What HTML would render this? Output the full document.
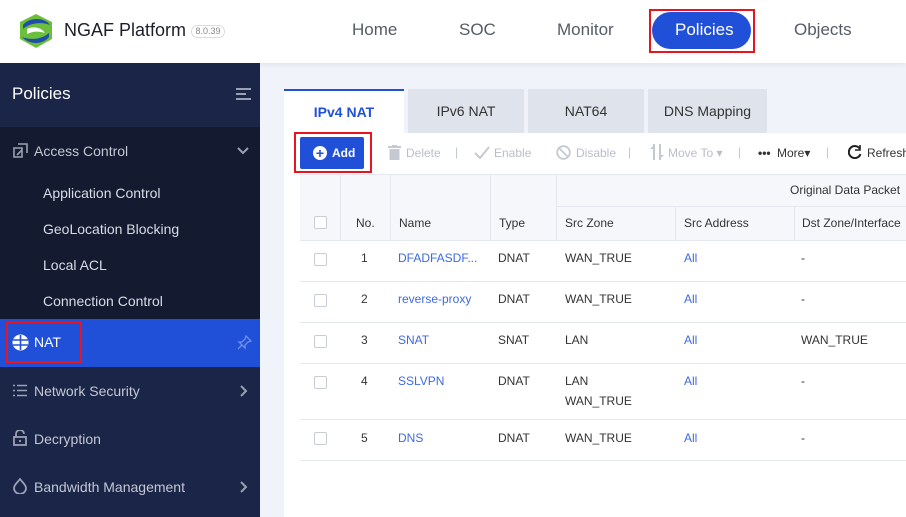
<!DOCTYPE html>
<html><head><meta charset="utf-8"><style>
*{margin:0;padding:0;box-sizing:border-box}
body{width:906px;height:517px;overflow:hidden;font-family:"Liberation Sans",sans-serif;background:#f0f3fa;position:relative;font-size:13px}
.a{position:absolute}
.hdr{left:0;top:0;width:906px;height:63px;background:#fff;box-shadow:0 2px 4px rgba(0,0,0,.06)}
.nav{top:20px;font-size:17px;color:#555c66}
.side{left:0;top:63px;width:260px;height:454px;background:#1b2547}
.sub{left:0;top:127px;width:260px;height:192px;background:#141a2f}
.st{color:#c3c8d4;font-size:14px}
.si{color:#d8dce6;font-size:14px;left:43px}
.panel{left:284px;top:133px;width:622px;height:384px;background:#fff}
.tab{top:89px;height:44px;background:#dfe3ec;font-size:14px;color:#333;text-align:center;line-height:44px}
.tb{top:146px;font-size:12px;color:#b9bec8}
.sep{top:145px;font-size:12px;color:#c0c4cc}
.th{color:#333;font-size:12px}
.cb{width:13px;height:13px;border:1px solid #c8ccd4;border-radius:2px;background:#fff}
.hl{background:#e4e7ed;height:1px}
.vl{background:#e4e7ed;width:1px}
.c{font-size:12px;color:#333}
.l{color:#3e6ae0}
.red{border:2px solid #e8141f}
</style></head><body>
<div class="a hdr"></div>
<svg class="a" style="left:17px;top:13px" width="38" height="36" viewBox="0 0 38 36"><path d="M19 1 L35 9 L35 26 L19 35 L3 26 L3 9Z" fill="#6cbf3a"/><path d="M6 12 C12 4 28 4 33 12 C26 9 14 9 6 16Z" fill="#1f4fa8"/><path d="M32 24 C26 32 12 32 5 24 C12 27 24 27 32 20Z" fill="#1f4fa8"/><path d="M10 16 C16 13 24 14 28 20 C22 18 16 18 10 21Z" fill="#fff"/></svg>
<div class="a" style="left:64px;top:20px;font-size:18px;color:#1c1f2a">NGAF Platform</div>
<div class="a" style="left:191px;top:25px;width:34px;height:13px;border:1px solid #d8dce4;border-radius:7px;font-size:9px;color:#888;text-align:center;line-height:11px">8.0.39</div>
<div class="a nav" style="left:352px">Home</div>
<div class="a nav" style="left:459px">SOC</div>
<div class="a nav" style="left:557px">Monitor</div>
<div class="a" style="left:652px;top:12px;width:99px;height:37px;background:#2150d8;border-radius:19px"></div>
<div class="a nav" style="left:675px;color:#fff">Policies</div>
<div class="a red" style="left:649px;top:9px;width:106px;height:44px"></div>
<div class="a nav" style="left:794px">Objects</div>

<div class="a side"></div>
<div class="a" style="left:12px;top:84px;color:#fff;font-size:17px">Policies</div>
<div class="a" style="left:236px;top:88px;width:15px;height:12px;border-top:2px solid #9aa1b3;border-bottom:2px solid #9aa1b3"><div style="margin-top:3px;width:10px;height:2px;background:#9aa1b3"></div></div>
<div class="a sub"></div>
<svg class="a" style="left:13px;top:143px" width="15" height="15" viewBox="0 0 15 15" fill="none" stroke="#9aa1b3" stroke-width="1.6"><path d="M1 5h8v9H1zM5 1h9v9"/><path d="M4 12l5-5"/></svg>
<div class="a st" style="left:34px;top:143px">Access Control</div>
<svg class="a" style="left:237px;top:147px" width="12" height="8" viewBox="0 0 12 8" fill="none" stroke="#9aa1b3" stroke-width="2"><path d="M1 1l5 5 5-5"/></svg>
<div class="a si" style="top:185px">Application Control</div>
<div class="a si" style="top:221px">GeoLocation Blocking</div>
<div class="a si" style="top:257px">Local ACL</div>
<div class="a si" style="top:293px">Connection Control</div>
<div class="a" style="left:0;top:319px;width:260px;height:48px;background:#2150d8"></div>
<svg class="a" style="left:12px;top:334px" width="17" height="17" viewBox="0 0 17 17"><circle cx="8.5" cy="8.5" r="8" fill="#fff"/><path d="M1 6h15M1 11h15M8.5 1v15" stroke="#2150d8" stroke-width="1.6"/></svg>
<div class="a" style="left:34px;top:334px;color:#fff;font-size:14px">NAT</div>
<svg class="a" style="left:237px;top:335px" width="15" height="15" viewBox="0 0 15 15" fill="none" stroke="#6f8ee8" stroke-width="1.3"><path d="M9 1l5 5-3 1-3 3 0 3-6-6 3 0 3-3zM5 10l-4 4"/></svg>
<div class="a red" style="left:6px;top:321px;width:76px;height:42px"></div>
<svg class="a" style="left:13px;top:384px" width="14" height="13" viewBox="0 0 14 13" stroke="#9aa1b3" stroke-width="1.6"><path d="M0 1.5h2M4 1.5h10M0 6.5h2M4 6.5h10M0 11.5h2M4 11.5h10"/></svg>
<div class="a st" style="left:34px;top:383px">Network Security</div>
<svg class="a" style="left:240px;top:385px" width="8" height="12" viewBox="0 0 8 12" fill="none" stroke="#9aa1b3" stroke-width="2"><path d="M1 1l5 5-5 5"/></svg>
<svg class="a" style="left:13px;top:430px" width="14" height="16" viewBox="0 0 14 16" fill="none" stroke="#9aa1b3" stroke-width="1.8"><path d="M3 7V4a4 4 0 0 1 8 0"/><rect x="1" y="7" width="12" height="8"/><path d="M7 10v2"/></svg>
<div class="a st" style="left:34px;top:431px">Decryption</div>
<svg class="a" style="left:13px;top:478px" width="14" height="16" viewBox="0 0 14 16" fill="none" stroke="#9aa1b3" stroke-width="1.8"><path d="M7 1C4 5 1 7 1 10a6 6 0 0 0 12 0c0-3-3-5-6-9z"/></svg>
<div class="a st" style="left:34px;top:479px">Bandwidth Management</div>
<svg class="a" style="left:240px;top:481px" width="8" height="12" viewBox="0 0 8 12" fill="none" stroke="#9aa1b3" stroke-width="2"><path d="M1 1l5 5-5 5"/></svg>

<div class="a panel"></div>
<div class="a tab" style="left:284px;width:120px;background:#fff;color:#2150d8;font-weight:bold;border-top:2px solid #2150d8;line-height:42px">IPv4 NAT</div>
<div class="a tab" style="left:408px;width:116px">IPv6 NAT</div>
<div class="a tab" style="left:528px;width:116px">NAT64</div>
<div class="a tab" style="left:648px;width:119px">DNS Mapping</div>

<div class="a" style="left:300px;top:137px;width:64px;height:32px;background:#2150d8;border-radius:2px"></div>
<div class="a" style="left:313px;top:146px;width:14px;height:14px;border-radius:50%;background:#fff;color:#2150d8;font-size:14px;font-weight:bold;line-height:14px;text-align:center">+</div>
<div class="a" style="left:332px;top:146px;color:#fff;font-size:12px;font-weight:bold">Add</div>
<div class="a red" style="left:294px;top:132px;width:78px;height:41px"></div>
<svg class="a" style="left:388px;top:145px" width="13" height="15" viewBox="0 0 13 15" fill="#c5c9d1"><rect x="0" y="1" width="13" height="2"/><rect x="4" y="0" width="5" height="2"/><rect x="1.5" y="4" width="10" height="11"/></svg>
<div class="a tb" style="left:406px">Delete</div>
<div class="a sep" style="left:455px">|</div>
<svg class="a" style="left:474px;top:146px" width="16" height="13" viewBox="0 0 16 13" fill="none" stroke="#c5c9d1" stroke-width="2"><path d="M1 7l5 5L15 1"/></svg>
<div class="a tb" style="left:494px">Enable</div>
<svg class="a" style="left:556px;top:145px" width="15" height="15" viewBox="0 0 15 15" fill="none" stroke="#c5c9d1" stroke-width="1.8"><circle cx="7.5" cy="7.5" r="6.3"/><path d="M3 3l9 9"/></svg>
<div class="a tb" style="left:576px">Disable</div>
<div class="a sep" style="left:628px">|</div>
<svg class="a" style="left:650px;top:144px" width="14" height="16" viewBox="0 0 14 16" fill="#c5c9d1"><rect x="3" y="0" width="2" height="16"/><rect x="9" y="0" width="2" height="16"/><path d="M0 5l4-4 0 4zM14 11l-4 4 0-4z"/></svg>
<div class="a tb" style="left:668px">Move To ▾</div>
<div class="a sep" style="left:738px">|</div>
<div class="a tb" style="left:758px;color:#333;font-weight:bold">•••</div>
<div class="a tb" style="left:777px;color:#333">More▾</div>
<div class="a sep" style="left:826px">|</div>
<svg class="a" style="left:848px;top:145px" width="14" height="14" viewBox="0 0 14 14" fill="none" stroke="#222" stroke-width="2"><path d="M12 4A6 6 0 1 0 12.5 9"/><path d="M12 0v5H7" stroke-width="1.6"/></svg>
<div class="a tb" style="left:867px;color:#333">Refresh</div>

<div class="a" style="left:300px;top:174px;width:606px;height:66px;background:#f5f7fa"></div>
<div class="a hl" style="left:300px;top:174px;width:606px"></div>
<div class="a hl" style="left:556px;top:206px;width:350px"></div>
<div class="a hl" style="left:300px;top:240px;width:606px"></div>
<div class="a vl" style="left:340px;top:174px;height:66px"></div>
<div class="a vl" style="left:390px;top:174px;height:66px"></div>
<div class="a vl" style="left:490px;top:174px;height:66px"></div>
<div class="a vl" style="left:556px;top:174px;height:66px"></div>
<div class="a vl" style="left:675px;top:206px;height:34px"></div>
<div class="a vl" style="left:794px;top:206px;height:34px"></div>
<div class="a cb" style="left:314px;top:216px"></div>
<div class="a th" style="left:356px;top:216px">No.</div>
<div class="a th" style="left:399px;top:216px">Name</div>
<div class="a th" style="left:499px;top:216px">Type</div>
<div class="a th" style="left:565px;top:216px">Src Zone</div>
<div class="a th" style="left:684px;top:216px">Src Address</div>
<div class="a th" style="left:802px;top:216px">Dst Zone/Interface</div>
<div class="a th" style="left:790px;top:183px">Original Data Packet</div>

<div class="a cb" style="left:314px;top:253px"></div><div class="a c" style="left:361px;top:251px">1</div><div class="a c l" style="left:398px;top:251px">DFADFASDF...</div><div class="a c" style="left:498px;top:251px">DNAT</div><div class="a c" style="left:565px;top:251px">WAN_TRUE</div><div class="a c l" style="left:684px;top:251px">All</div><div class="a c" style="left:801px;top:251px">-</div>
<div class="a hl" style="left:300px;top:281px;width:606px"></div>
<div class="a cb" style="left:314px;top:294px"></div><div class="a c" style="left:361px;top:292px">2</div><div class="a c l" style="left:398px;top:292px">reverse-proxy</div><div class="a c" style="left:498px;top:292px">DNAT</div><div class="a c" style="left:565px;top:292px">WAN_TRUE</div><div class="a c l" style="left:684px;top:292px">All</div><div class="a c" style="left:801px;top:292px">-</div>
<div class="a hl" style="left:300px;top:322px;width:606px"></div>
<div class="a cb" style="left:314px;top:335px"></div><div class="a c" style="left:361px;top:333px">3</div><div class="a c l" style="left:398px;top:333px">SNAT</div><div class="a c" style="left:498px;top:333px">SNAT</div><div class="a c" style="left:565px;top:333px">LAN</div><div class="a c l" style="left:684px;top:333px">All</div><div class="a c" style="left:801px;top:333px">WAN_TRUE</div>
<div class="a hl" style="left:300px;top:363px;width:606px"></div>
<div class="a cb" style="left:314px;top:376px"></div><div class="a c" style="left:361px;top:374px">4</div><div class="a c l" style="left:398px;top:374px">SSLVPN</div><div class="a c" style="left:498px;top:374px">DNAT</div><div class="a c" style="left:565px;top:374px">LAN</div><div class="a c" style="left:565px;top:394px">WAN_TRUE</div><div class="a c l" style="left:684px;top:374px">All</div><div class="a c" style="left:801px;top:374px">-</div>
<div class="a hl" style="left:300px;top:419px;width:606px"></div>
<div class="a cb" style="left:314px;top:432px"></div><div class="a c" style="left:361px;top:431px">5</div><div class="a c l" style="left:398px;top:431px">DNS</div><div class="a c" style="left:498px;top:431px">DNAT</div><div class="a c" style="left:565px;top:431px">WAN_TRUE</div><div class="a c l" style="left:684px;top:431px">All</div><div class="a c" style="left:801px;top:431px">-</div>
<div class="a hl" style="left:300px;top:460px;width:606px"></div>
</body></html>
